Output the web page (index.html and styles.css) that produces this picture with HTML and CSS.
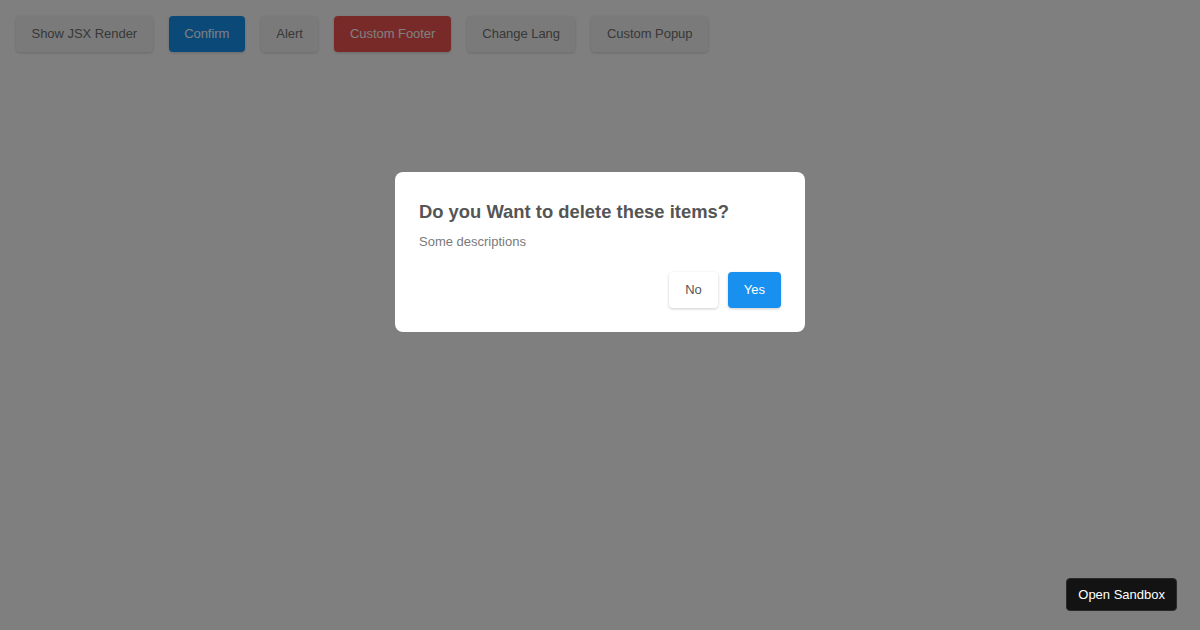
FILE: index.html
```html
<!DOCTYPE html>
<html>
<head>
<meta charset="utf-8">
<link rel="stylesheet" href="styles.css">
</head>
<body>
<div class="toolbar">
  <button class="btn">Show JSX Render</button>
  <button class="btn btn-primary">Confirm</button>
  <button class="btn">Alert</button>
  <button class="btn btn-danger">Custom Footer</button>
  <button class="btn">Change Lang</button>
  <button class="btn">Custom Popup</button>
</div>
<div class="overlay">
  <div class="modal">
    <h2 class="modal-title">Do you Want to delete these items?</h2>
    <p class="modal-desc">Some descriptions</p>
    <div class="modal-footer">
      <button class="mbtn">No</button>
      <button class="mbtn mbtn-primary">Yes</button>
    </div>
  </div>
</div>
<button class="sandbox">Open Sandbox</button>
</body>
</html>
```
FILE: styles.css
```css
html, body {
  margin: 0;
  padding: 0;
  background: #ffffff;
  font-family: "Liberation Sans", Arial, sans-serif;
}
.toolbar {
  display: flex;
  gap: 16px;
  padding: 16px;
}
.btn {
  height: 36px;
  padding: 0 15.5px 2px;
  border: none;
  border-radius: 4px;
  background: #f5f5f5;
  color: #707070;
  font-family: "Liberation Sans", Arial, sans-serif;
  font-size: 13px;
  letter-spacing: -0.04px;
  box-shadow: 0 1px 3px rgba(0,0,0,0.18);
}
.btn-primary {
  background: #1792f2;
  color: #ffffff;
}
.btn-danger {
  background: #ef5551;
  color: #ffffff;
}
.overlay {
  position: fixed;
  inset: 0;
  background: rgba(0,0,0,0.5);
  display: flex;
  justify-content: center;
  align-items: flex-start;
  padding-top: 172px;
}
.modal {
  width: 362px;
  background: #ffffff;
  border-radius: 8px;
  padding: 24px;
}
.modal-title {
  margin: 0;
  font-size: 18.4px;
  font-weight: bold;
  color: #555555;
  line-height: 32px;
}
.modal-desc {
  margin: 5px 0 0;
  font-size: 13px;
  color: #7a7a7a;
  line-height: 18px;
}
.modal-footer {
  display: flex;
  justify-content: flex-end;
  gap: 10px;
  margin-top: 21px;
}
.mbtn {
  height: 36px;
  padding: 0 16px 2px;
  border: none;
  border-radius: 4px;
  background: #ffffff;
  color: #555555;
  font-family: "Liberation Sans", Arial, sans-serif;
  font-size: 13px;
  box-shadow: 0 1px 3px rgba(0,0,0,0.2);
}
.mbtn-primary {
  background: #1890f0;
  color: #ffffff;
}
.sandbox {
  position: fixed;
  right: 23px;
  bottom: 19px;
  height: 33px;
  padding: 0 11px 1px;
  border: 1px solid #2a2a2a;
  border-radius: 4px;
  background: #131313;
  color: #ffffff;
  font-family: "Liberation Sans", Arial, sans-serif;
  font-size: 13px;
}
```
